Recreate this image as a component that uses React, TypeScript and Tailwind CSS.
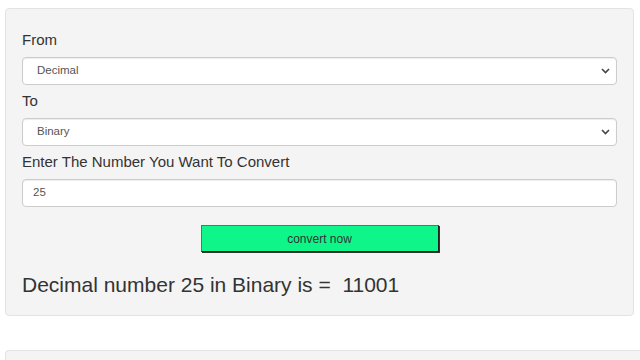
import React from "react";

function Chevron() {
  return (
    <svg width="9" height="6" viewBox="0 0 9 6" className="absolute right-[6px] top-1/2 -translate-y-1/2">
      <path d="M1 1 L4.5 4.5 L8 1" fill="none" stroke="#444" strokeWidth="1.6" />
    </svg>
  );
}

function SelectBox({ value }: { value: string }) {
  return (
    <div className="relative h-[28px] w-full rounded-[4px] border border-[#cccccc] bg-white shadow-[inset_0_1px_1px_rgba(0,0,0,0.075)]">
      <span className="absolute left-[14px] top-1/2 -translate-y-1/2 text-[11.5px] text-[#555]">{value}</span>
      <Chevron />
    </div>
  );
}

export default function App() {
  return (
    <div className="min-h-[360px] bg-white pt-[8px] font-['Liberation_Sans',Arial,sans-serif] text-[#333]">
      <div className="ml-[5px] w-[629px] rounded-[4px] border border-[#e3e3e3] bg-[#f4f4f4] px-[16px] pb-[16px] pt-[21px]">
        <div className="flex flex-col">
          <label className="block h-[20px] leading-[20px] text-[15px]">From</label>
          <div className="mt-[7px]"><SelectBox value="Decimal" /></div>
          <label className="mt-[6px] block h-[20px] leading-[20px] text-[15px]">To</label>
          <div className="mt-[7px]"><SelectBox value="Binary" /></div>
          <label className="mt-[6px] block h-[20px] leading-[20px] text-[15px]">Enter The Number You Want To Convert</label>
          <div className="mt-[7px] flex h-[28px] w-full items-center rounded-[4px] border border-[#cccccc] bg-white pl-[10px] text-[11.5px] text-[#555] shadow-[inset_0_1px_1px_rgba(0,0,0,0.075)]">
            25
          </div>
          <div className="mt-[18px] flex justify-center">
            <div className="flex h-[27px] w-[238px] items-center justify-center border border-t-[#6b6b6b] border-l-[#6b6b6b] border-r-[#222] border-b-[#222] bg-[#0ef68a] text-[12px] text-[#333] shadow-[1px_1px_0_#333]">
              convert now
            </div>
          </div>
          <div className="mt-[18px] h-[29px] text-[21px] leading-[29px] whitespace-pre">Decimal number 25 in Binary is =  11001</div>
        </div>
      </div>
      <div className="ml-[5px] mt-[34px] h-[20px] rounded-tl-[4px] border-l border-t border-[#e3e3e3] bg-[#f4f4f4]"></div>
    </div>
  );
}
